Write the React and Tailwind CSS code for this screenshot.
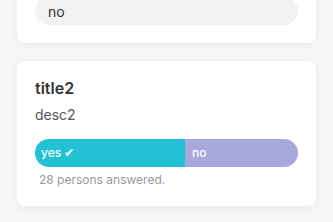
export default function App() {
  return (
    <div
      className="h-[222px] w-[333px] overflow-hidden bg-[#f6f6f8] px-[17px]"
      style={{ fontFamily: 'Inter, "Noto Sans", sans-serif' }}
    >
      <div className="mt-[-21px] flex flex-col gap-[18px]">
        <div className="rounded-[8px] bg-white px-[18px] pb-[18px] pt-[18px] shadow-[0_2px_10px_rgba(0,0,0,0.05)]">
          <div className="flex h-[28px] items-center rounded-full bg-[#f2f2f2] px-[13px] text-[14px] text-[#333]">
            no
          </div>
        </div>

        <div className="rounded-[8px] bg-white px-[18px] pb-[18px] pt-[15px] shadow-[0_2px_10px_rgba(0,0,0,0.05)]">
          <div className="text-[16px] font-semibold leading-[24px] text-[#333]">title2</div>
          <div className="mt-[5px] text-[14px] leading-[20px] text-[#555]">desc2</div>
          <div className="mt-[14px] flex h-[28px] overflow-hidden rounded-full text-[12px] font-medium text-white">
            <div className="flex w-[150px] items-center bg-[#22c1d3] pl-[6px]">yes ✔</div>
            <div className="flex flex-1 items-center bg-[#a9a8dc] pl-[7px]">no</div>
          </div>
          <div className="mt-[5px] pl-[4px] text-[12px] leading-[16px] text-[#999]">28 persons answered.</div>
        </div>
      </div>
    </div>
  )
}
